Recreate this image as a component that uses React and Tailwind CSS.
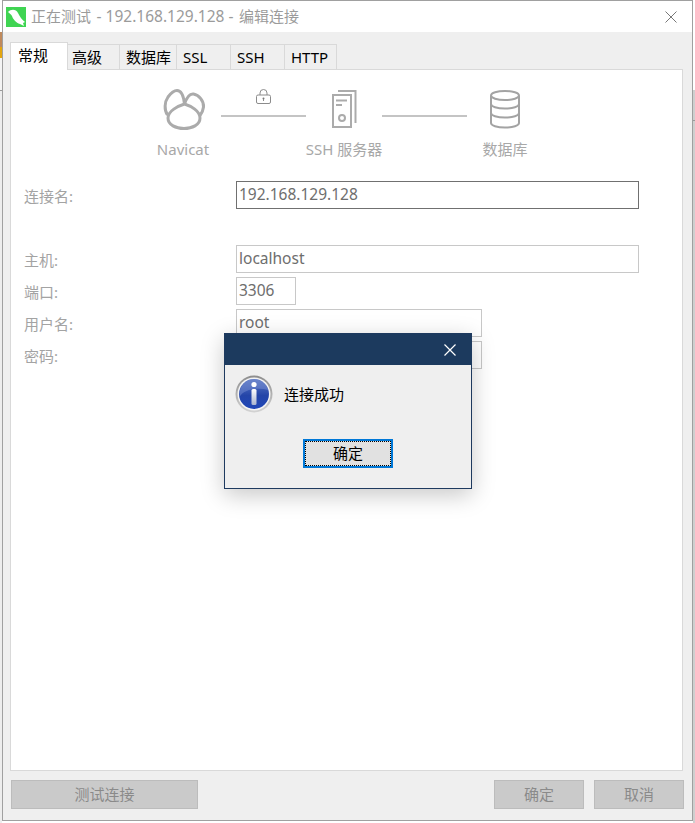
const fontStack = "font-['Noto_Sans','Noto_Sans_CJK_SC',sans-serif]";

function NavicatLogo() {
    return (
        <svg width="50" height="48" viewBox="0 0 50 48" fill="none" stroke="#ababab" strokeWidth="3">
            <path d="M9.5 30C6 25 6.5 17 10 12 13 8 16 5.5 19 5.5 23 5.5 25.5 10 26.5 19" />
            <path d="M26.5 19C28.5 13 32 8.5 35.5 9 41 10 46 16 45.5 22 45 26 44 28 42 30.5" />
            <path d="M26.5 19C20 21 10 26 10 33 10 40 18 43.5 26 43.5 34 43.5 42 40 42 33 42 26 33 21 26.5 19Z" />
        </svg>
    );
}

function ServerIcon() {
    return (
        <svg width="28" height="48" viewBox="0 0 28 48" fill="none" stroke="#ababab" strokeWidth="2">
            <path d="M8 6H25.5V38" />
            <rect x="3" y="10" width="18" height="32" fill="#ffffff" />
            <path d="M6 15.5H17M6 20H12" />
            <circle cx="12" cy="33" r="3" />
        </svg>
    );
}

function DatabaseIcon() {
    return (
        <svg width="32" height="48" viewBox="0 0 32 48" fill="none" stroke="#a3a3a3" strokeWidth="2">
            <ellipse cx="16" cy="10.5" rx="14" ry="4.5" />
            <path d="M2 11V38c0 2.5 6 4.5 14 4.5S30 40.5 30 38V11" />
            <path d="M2 19c0 2.5 6 4.5 14 4.5S30 21.5 30 19" />
            <path d="M2 28c0 2.5 6 4.5 14 4.5S30 30.5 30 28" />
        </svg>
    );
}

function LockIcon() {
    return (
        <svg width="15" height="15" viewBox="0 0 15 15" fill="none" stroke="#8c8c8c" strokeWidth="1">
            <rect x="0.5" y="6" width="14" height="8.5" rx="1.5" />
            <path d="M4 6V4a3.5 3.5 0 0 1 7 0V6" />
            <circle cx="7.5" cy="9.5" r="1" fill="#777777" stroke="none" />
            <path d="M7.5 10v2" />
        </svg>
    );
}

function InfoIcon() {
    return (
        <svg width="38" height="38" viewBox="0 0 38 38">
            <defs>
                <linearGradient id="ring" x1="0" y1="0" x2="0" y2="1">
                    <stop offset="0" stopColor="#8d8d8d" />
                    <stop offset="1" stopColor="#d4d4d4" />
                </linearGradient>
                <linearGradient id="ball" x1="0" y1="0" x2="0" y2="1">
                    <stop offset="0" stopColor="#5b78c4" />
                    <stop offset="0.55" stopColor="#2445a8" />
                    <stop offset="1" stopColor="#1f46b8" />
                </linearGradient>
                <linearGradient id="stem" x1="0" y1="0" x2="0" y2="1">
                    <stop offset="0" stopColor="#ffffff" />
                    <stop offset="1" stopColor="#a9b4d0" />
                </linearGradient>
            </defs>
            <circle cx="19" cy="19" r="18.5" fill="url(#ring)" />
            <circle cx="19" cy="19" r="16.5" fill="#f4f4f4" />
            <circle cx="19" cy="19" r="15" fill="url(#ball)" />
            <path d="M4.5 22C9 14 22 12 33.5 15 32 9 26 4 19 4 11 4 4.5 11 4.5 19z" fill="#7e95d4" opacity="0.45" />
            <circle cx="19" cy="9.5" r="2.6" fill="#ffffff" />
            <rect x="16.5" y="14" width="5" height="16" rx="1.5" fill="url(#stem)" />
        </svg>
    );
}

function CloseIcon({ size, color, width }) {
    return (
        <svg width={size} height={size} viewBox="0 0 12 12" stroke={color} strokeWidth={width} fill="none">
            <path d="M0.5 0.5l11 11M11.5 0.5l-11 11" />
        </svg>
    );
}

function Tab({ label, width, pad = "pl-[6px]" }) {
    return (
        <div className={`${width} ${pad} h-[25px] flex items-center border-t border-r border-[#d9d9d9] text-[15px] text-black`}>
            {label}
        </div>
    );
}

function Step({ icon, label }) {
    return (
        <div className="w-[76px] pt-[15px] flex flex-col items-center">
            <div className="h-[48px]">{icon}</div>
            <div className="mt-[6px] h-[20px] leading-[20px] whitespace-nowrap text-[15px] text-[#a8a8a8]">{label}</div>
        </div>
    );
}

function Connector({ locked }) {
    return (
        <div className="w-[85px] h-[47px] flex flex-col justify-end items-center">
            {locked && <div className="mb-[11px] h-[15px]"><LockIcon /></div>}
            <div className="w-full h-[2px] bg-[#c4c4c4]"></div>
        </div>
    );
}

function Field({ label, value, width, dark }) {
    return (
        <div className="h-[32px] flex items-start">
            <div className="w-[212px] pt-[5px] text-[15px] leading-[20px] text-[#a3a3a3]">{label}</div>
            <div className={`${width} h-[28px] flex items-center pl-[2px] bg-white border ${dark ? "border-[#707070]" : "border-[#c8c8c8]"} text-[15.5px] text-[#6e6e6e]`}>
                {value}
            </div>
        </div>
    );
}

function FootButton({ label, width }) {
    return (
        <div className={`${width} h-[29px] flex items-center justify-center bg-[#cacaca] border border-[#bcbcbc] text-[15px] text-[#8a8a8a]`}>
            {label}
        </div>
    );
}

export default function App() {
    return (
        <div className={`${fontStack} relative w-[695px] h-[823px] bg-white overflow-hidden flex`}>
            {/* window behind, left edge */}
            <div className="w-[2px] shrink-0 flex flex-col">
                <div className="h-[32px] bg-white"></div>
                <div className="h-[15px] bg-[#c08a5c]"></div>
                <div className="h-[11px] bg-[#e3a60f]"></div>
                <div className="h-[32px] bg-[#f4f4f4]"></div>
                <div className="h-px bg-[#9a9a9a]"></div>
                <div className="flex-1 bg-[#ededed]"></div>
            </div>

            {/* main dialog */}
            <div className="w-[691px] h-[821px] shrink-0 flex flex-col border border-[#a0a0a0] bg-[#efefef]">
                <div className="h-[31px] shrink-0 bg-white flex items-center pl-[3px] pr-[15px]">
                    <svg width="20" height="20" viewBox="0 0 20 20">
                        <rect width="20" height="20" fill="#3fd452" />
                        <path d="M2 5C5 2 10 2 12 6 14 10 16 13 19 15L17 16 18 19 14 17C10 16 7 12 6 9 5 7 3 6 2 5z" fill="#ffffff" />
                    </svg>
                    <div className="ml-[5px] text-[15px] text-[#9b9b9b] whitespace-nowrap">
                        正在测试<span className="text-[15.5px] px-[1.5px]"> - 192.168.129.128 - </span>编辑连接
                    </div>
                    <div className="ml-auto">
                        <CloseIcon size={12} color="#777777" width={1} />
                    </div>
                </div>

                <div className="flex-1 flex flex-col pl-[7px] pr-[9px] pt-[10px]">
                    {/* tabs */}
                    <div className="flex items-end h-[27px]">
                        <div className="w-[58px] h-[28px] -mb-px relative pb-[3px] flex items-center pl-[7px] bg-white border border-b-0 border-[#d9d9d9] text-[15px] text-black">
                            常规
                        </div>
                        <Tab label="高级" width="w-[52px]" pad="pl-[4px]" />
                        <Tab label="数据库" width="w-[57px]" />
                        <Tab label="SSL" width="w-[54px]" />
                        <Tab label="SSH" width="w-[54px]" />
                        <Tab label="HTTP" width="w-[52px]" />
                    </div>

                    <div className="h-[702px] bg-white border border-[#d9d9d9] pl-[13px]">
                        {/* connection diagram */}
                        <div className="h-[111px] pl-[121px] flex items-start">
                            <Step icon={<NavicatLogo />} label="Navicat" />
                            <Connector locked />
                            <Step icon={<ServerIcon />} label="SSH 服务器" />
                            <Connector />
                            <Step icon={<DatabaseIcon />} label="数据库" />
                        </div>

                        <Field label="连接名:" value="192.168.129.128" width="w-[403px]" dark />
                        <div className="h-[32px]"></div>
                        <Field label="主机:" value="localhost" width="w-[403px]" />
                        <Field label="端口:" value="3306" width="w-[60px]" />
                        <Field label="用户名:" value="root" width="w-[246px]" />
                        <Field label="密码:" value="" width="w-[246px]" />
                    </div>

                    <div className="mt-[9px] ml-px -mr-px flex">
                        <FootButton label="测试连接" width="w-[187px]" />
                        <div className="ml-auto flex gap-[10px]">
                            <FootButton label="确定" width="w-[90px]" />
                            <FootButton label="取消" width="w-[90px]" />
                        </div>
                    </div>
                </div>
            </div>

            {/* window behind, right edge */}
            <div className="w-[2px] shrink-0 flex flex-col bg-[#cfcfcf]">
                <div className="h-[90px] bg-white"></div>
                <div className="h-[30px]"></div>
                <div className="h-px bg-[#9a9a9a]"></div>
            </div>

            {/* message box */}
            <div className="absolute left-[224px] top-[333px] w-[248px] h-[156px] flex flex-col bg-[#efefef] border border-[#1e3a5f] shadow-[0_6px_22px_rgba(0,0,0,0.22)]">
                <div className="h-[31px] shrink-0 bg-[#1c3a5e] flex items-center justify-end pr-[15px]">
                    <CloseIcon size={12} color="#ffffff" width={1.2} />
                </div>
                <div className="flex items-center pl-[10px] pt-[10px]">
                    <InfoIcon />
                    <div className="ml-[11px] text-[15px] text-black">连接成功</div>
                </div>
                <div className="mt-[26px] flex justify-center">
                    <div className="w-[90px] h-[29px] p-[2px] bg-[#0078d7]">
                        <div className="w-full h-full flex items-center justify-center bg-[#e1e1e1] border border-dotted border-black text-[15px] text-black">确定</div>
                    </div>
                </div>
            </div>
        </div>
    );
}
